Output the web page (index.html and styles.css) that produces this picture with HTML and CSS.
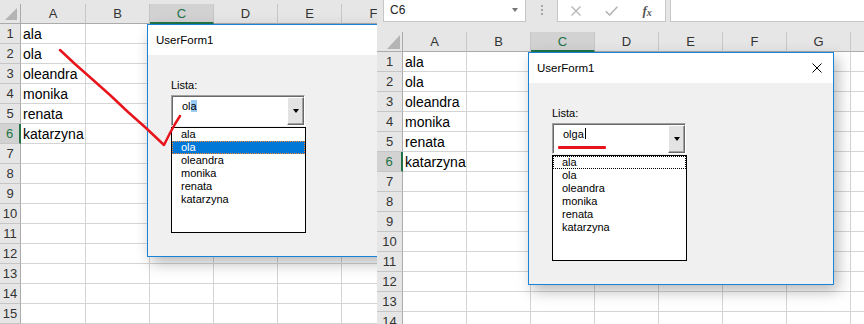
FILE: index.html
```html
<!DOCTYPE html>
<html lang="pl">

<head>
    <meta charset="UTF-8">
    <meta name="viewport" content="width=device-width, initial-scale=1.0">
    <title>UserForm1 - ComboBox</title>
    <link rel="stylesheet" href="styles.css">
</head>

<body>
    <div class="shots">

        <!-- before: autocomplete jumps to "ola" -->
        <div class="sheet sheet-left">
            <div class="top-strip"></div>
            <div class="col-heads">
                <div class="corner"><span class="tri"></span></div>
                <div class="ch wide">A</div>
                <div class="ch">B</div>
                <div class="ch active">C</div>
                <div class="ch">D</div>
                <div class="ch">E</div>
                <div class="ch">F</div>
            </div>
            <div class="row"><div class="rh">1</div><div class="cell">ala</div><div class="rest"></div></div>
            <div class="row"><div class="rh">2</div><div class="cell">ola</div><div class="rest"></div></div>
            <div class="row"><div class="rh">3</div><div class="cell">oleandra</div><div class="rest"></div></div>
            <div class="row"><div class="rh">4</div><div class="cell">monika</div><div class="rest"></div></div>
            <div class="row"><div class="rh">5</div><div class="cell">renata</div><div class="rest"></div></div>
            <div class="row"><div class="rh active">6</div><div class="cell">katarzyna</div><div class="rest"></div></div>
            <div class="row"><div class="rh">7</div><div class="cell"></div><div class="rest"></div></div>
            <div class="row"><div class="rh">8</div><div class="cell"></div><div class="rest"></div></div>
            <div class="row"><div class="rh">9</div><div class="cell"></div><div class="rest"></div></div>
            <div class="row"><div class="rh">10</div><div class="cell"></div><div class="rest"></div></div>
            <div class="row"><div class="rh">11</div><div class="cell"></div><div class="rest"></div></div>
            <div class="row"><div class="rh">12</div><div class="cell"></div><div class="rest"></div></div>
            <div class="row"><div class="rh">13</div><div class="cell"></div><div class="rest"></div></div>
            <div class="row"><div class="rh">14</div><div class="cell"></div><div class="rest"></div></div>
            <div class="row"><div class="rh">15</div><div class="cell"></div><div class="rest"></div></div>

            <div class="userform uf-left">
                <div class="uf-title">
                    <span>UserForm1</span>
                    <svg class="uf-close" width="10" height="10" viewBox="0 0 10 10">
                        <path d="M0.5 0.5 L9.5 9.5 M9.5 0.5 L0.5 9.5" stroke="#000" stroke-width="1" fill="none" />
                    </svg>
                </div>
                <div class="uf-body">
                    <div class="uf-label">Lista:</div>
                    <div class="combo">
                        <div class="combo-text">ol<span class="sel">a</span></div>
                        <div class="combo-btn"><span class="arrow"></span></div>
                    </div>
                    <ul class="combo-list">
                        <li>ala</li>
                        <li class="picked">ola</li>
                        <li>oleandra</li>
                        <li>monika</li>
                        <li>renata</li>
                        <li>katarzyna</li>
                    </ul>
                </div>
            </div>

            <!-- red hand-drawn arrow from A2 to the combo -->
            <svg class="scribble" width="377" height="324" viewBox="0 0 377 324">
                <polyline points="60,50 75,64 92,79 110,95 128,112 146,128 164,145 170,133 175,124 180,116"
                    fill="none" stroke="#e8141c" stroke-width="2.5" stroke-linejoin="round" stroke-linecap="round" />
            </svg>
        </div>

        <!-- after: typing "olga" keeps the list at the top -->
        <div class="sheet sheet-right">
            <div class="fbar">
                <div class="namebox">
                    <span>C6</span>
                    <span class="nb-arrow"></span>
                </div>
                <div class="fb-sep"><span></span></div>
                <div class="fb-buttons">
                    <span class="fb-btn">
                        <svg width="10" height="10" viewBox="0 0 10 10">
                            <path d="M0.5 0.5 L9.5 9.5 M9.5 0.5 L0.5 9.5" stroke="#b4b4b4" stroke-width="1.2" fill="none" />
                        </svg>
                    </span>
                    <span class="fb-btn">
                        <svg width="13" height="10" viewBox="0 0 13 10">
                            <path d="M0.8 5.2 L4.6 9 L12.4 0.8" stroke="#b4b4b4" stroke-width="1.6" fill="none" />
                        </svg>
                    </span>
                    <span class="fb-btn fx"><i>f</i><i class="x">x</i></span>
                </div>
                <div class="fb-input"></div>
            </div>
            <div class="col-heads">
                <div class="corner"><span class="tri"></span></div>
                <div class="ch">A</div>
                <div class="ch">B</div>
                <div class="ch active">C</div>
                <div class="ch">D</div>
                <div class="ch">E</div>
                <div class="ch">F</div>
                <div class="ch">G</div>
                <div class="ch"></div>
            </div>
            <div class="row"><div class="rh">1</div><div class="cell">ala</div><div class="rest"></div></div>
            <div class="row"><div class="rh">2</div><div class="cell">ola</div><div class="rest"></div></div>
            <div class="row"><div class="rh">3</div><div class="cell">oleandra</div><div class="rest"></div></div>
            <div class="row"><div class="rh">4</div><div class="cell">monika</div><div class="rest"></div></div>
            <div class="row"><div class="rh">5</div><div class="cell">renata</div><div class="rest"></div></div>
            <div class="row"><div class="rh active">6</div><div class="cell">katarzyna</div><div class="rest"></div></div>
            <div class="row"><div class="rh">7</div><div class="cell"></div><div class="rest"></div></div>
            <div class="row"><div class="rh">8</div><div class="cell"></div><div class="rest"></div></div>
            <div class="row"><div class="rh">9</div><div class="cell"></div><div class="rest"></div></div>
            <div class="row"><div class="rh">10</div><div class="cell"></div><div class="rest"></div></div>
            <div class="row"><div class="rh">11</div><div class="cell"></div><div class="rest"></div></div>
            <div class="row"><div class="rh">12</div><div class="cell"></div><div class="rest"></div></div>
            <div class="row"><div class="rh">13</div><div class="cell"></div><div class="rest"></div></div>
            <div class="row"><div class="rh">14</div><div class="cell"></div><div class="rest"></div></div>

            <div class="userform uf-right">
                <div class="uf-title">
                    <span>UserForm1</span>
                    <svg class="uf-close" width="10" height="10" viewBox="0 0 10 10">
                        <path d="M0.5 0.5 L9.5 9.5 M9.5 0.5 L0.5 9.5" stroke="#000" stroke-width="1" fill="none" />
                    </svg>
                </div>
                <div class="uf-body">
                    <div class="uf-label">Lista:</div>
                    <div class="combo">
                        <div class="combo-text">olga<span class="caret"></span></div>
                        <div class="combo-btn"><span class="arrow"></span></div>
                    </div>
                    <ul class="combo-list">
                        <li class="focused">ala</li>
                        <li>ola</li>
                        <li>oleandra</li>
                        <li>monika</li>
                        <li>renata</li>
                        <li>katarzyna</li>
                    </ul>
                </div>
            </div>

            <!-- red underline under the typed text -->
            <div class="underline"></div>
        </div>

    </div>
</body>

</html>
```

FILE: styles.css
```css
body {
    margin: 0;
    background: #fff;
    font-family: "Liberation Sans", Arial, sans-serif;
}

.shots {
    display: flex;
    width: 864px;
    height: 324px;
    overflow: hidden;
}

.sheet {
    position: relative;
    overflow: hidden;
    background: #fff;
}

.sheet-left {
    width: 377px;
    flex: none;
}

.sheet-right {
    flex: 1;
}

/* ---------- grid ---------- */

.top-strip {
    height: 4px;
    background: #e6e6e6;
}

.col-heads {
    display: flex;
    height: 20px;
    background: #e6e6e6;
}

.corner {
    flex: none;
    display: flex;
    justify-content: flex-end;
    align-items: flex-end;
    padding: 0 3px 3px 0;
    box-sizing: border-box;
    border-right: 1px solid #ababab;
    border-bottom: 1px solid #ababab;
}

.tri {
    width: 12px;
    height: 12px;
    background: #b4b4b4;
    clip-path: polygon(100% 0, 100% 100%, 0 100%);
}

.ch {
    flex: none;
    width: 64px;
    box-sizing: border-box;
    border-right: 1px solid #c6c6c6;
    border-bottom: 1px solid #ababab;
    text-align: center;
    font-size: 13px;
    line-height: 19px;
    color: #333;
}

.ch.active {
    background: #d2d2d2;
    border-bottom: 2px solid #217346;
    color: #217346;
}

.row {
    display: flex;
    height: 20px;
}

.rh {
    flex: none;
    box-sizing: border-box;
    border-right: 1px solid #ababab;
    border-bottom: 1px solid #c6c6c6;
    background: #e6e6e6;
    text-align: center;
    font-size: 13px;
    line-height: 19px;
    color: #333;
}

.rh.active {
    background: #d2d2d2;
    border-right: 2px solid #217346;
    color: #217346;
}

.cell {
    flex: none;
    width: 64px;
    box-sizing: border-box;
    padding-left: 2px;
    border-right: 1px solid #d4d4d4;
    border-bottom: 1px solid #d4d4d4;
    font-size: 14px;
    line-height: 20px;
    color: #000;
    white-space: nowrap;
}

.rest {
    flex: 1;
    border-bottom: 1px solid #d4d4d4;
    background-image: repeating-linear-gradient(to right, transparent 0 63px, #d4d4d4 63px 64px);
}

.sheet-left .corner,
.sheet-left .rh {
    width: 21px;
}

.sheet-left .ch.wide,
.sheet-left .cell {
    width: 65px;
}

.sheet-right .corner,
.sheet-right .rh {
    width: 26px;
}

.sheet-right .corner {
    padding: 0 2px 2px 0;
}

.sheet-right .tri {
    width: 13px;
    height: 14px;
}

/* ---------- formula bar ---------- */

.fbar {
    display: flex;
    align-items: flex-start;
    height: 32px;
    padding-left: 6px;
    background: #e6e6e6;
}

.namebox {
    display: flex;
    align-items: center;
    justify-content: space-between;
    width: 143px;
    height: 22px;
    box-sizing: border-box;
    padding: 0 7px 1px 6px;
    background: #fff;
    border: 1px solid #c6c6c6;
    border-top: none;
    font-size: 12px;
    color: #222;
}

.nb-arrow {
    width: 0;
    height: 0;
    border-left: 3.5px solid transparent;
    border-right: 3.5px solid transparent;
    border-top: 4px solid #767676;
}

.fb-sep {
    display: flex;
    justify-content: center;
    width: 31px;
    padding-top: 5px;
}

.fb-sep span {
    height: 10px;
    border-left: 2px dotted #a6a6a6;
}

.fb-buttons {
    display: flex;
    width: 109px;
    height: 22px;
    box-sizing: border-box;
    background: #fff;
    border: 1px solid #c6c6c6;
    border-top: none;
}

.fb-btn {
    display: flex;
    align-items: center;
    justify-content: center;
    width: 36px;
}

.fb-btn.fx {
    font-family: "Liberation Serif", serif;
    font-size: 13px;
    font-weight: bold;
    color: #555;
}

.fb-btn.fx .x {
    font-size: 10px;
    margin-top: 3px;
}

.fb-input {
    flex: 1;
    height: 22px;
    margin-left: 4px;
    box-sizing: border-box;
    background: #fff;
    border-left: 1px solid #c6c6c6;
    border-bottom: 1px solid #c6c6c6;
}

/* ---------- user form ---------- */

.userform {
    position: absolute;
    width: 306px;
    height: 233px;
    box-sizing: border-box;
    border: 1px solid #1883d7;
    background: #f0f0f0;
    box-shadow: 4px 6px 14px rgba(0, 0, 0, 0.28);
}

.uf-left {
    left: 147px;
    top: 24px;
}

.uf-right {
    left: 151px;
    top: 52px;
}

.uf-title {
    display: flex;
    align-items: center;
    justify-content: space-between;
    height: 30px;
    padding: 0 11px 0 8px;
    background: #fff;
    font-size: 11.5px;
    color: #000;
}

.uf-body {
    padding: 24px 0 0 23px;
    font-size: 11px;
    color: #000;
}

.uf-label {
    line-height: 13px;
    margin-bottom: 3px;
}

.combo {
    display: flex;
    width: 134px;
    height: 31px;
    box-sizing: border-box;
    background: #fff;
    border: 1px solid;
    border-color: #a0a0a0 #fff #fff #a0a0a0;
    box-shadow: inset 1px 1px #696969;
}

.combo-text {
    flex: 1;
    padding: 4px 0 0 10px;
    line-height: 13px;
}

.sel {
    background: #99c9ef;
}

.caret {
    display: inline-block;
    width: 1px;
    height: 11px;
    margin-left: 1px;
    vertical-align: -1px;
    background: #000;
}

.combo-btn {
    display: flex;
    align-items: center;
    justify-content: center;
    width: 17px;
    margin: 1px 0 0 0;
    box-sizing: border-box;
    background: #e3e3e3;
    border: 1px solid;
    border-color: #fff #696969 #696969 #fff;
    box-shadow: inset -1px -1px #a0a0a0;
}

.arrow {
    width: 0;
    height: 0;
    border-left: 3.5px solid transparent;
    border-right: 3.5px solid transparent;
    border-top: 4px solid #000;
}

.combo-list {
    list-style: none;
    margin: 1px 0 0 0;
    padding: 0;
    width: 135px;
    height: 106px;
    box-sizing: border-box;
    border: 1px solid #000;
    background: #fff;
}

.combo-list li {
    height: 13px;
    line-height: 13px;
    padding-left: 9px;
}

.combo-list li.picked {
    background: #0078d7;
    color: #fff;
    outline: 1px dotted #ff8728;
    outline-offset: -1px;
}

.combo-list li.focused {
    outline: 1px dotted #000;
    outline-offset: -1px;
}

/* ---------- annotations ---------- */

.scribble {
    position: absolute;
    left: 0;
    top: 0;
    pointer-events: none;
}

.underline {
    position: absolute;
    left: 181px;
    top: 146px;
    width: 48px;
    height: 3px;
    border-radius: 1px;
    background: #e8141c;
}
```
